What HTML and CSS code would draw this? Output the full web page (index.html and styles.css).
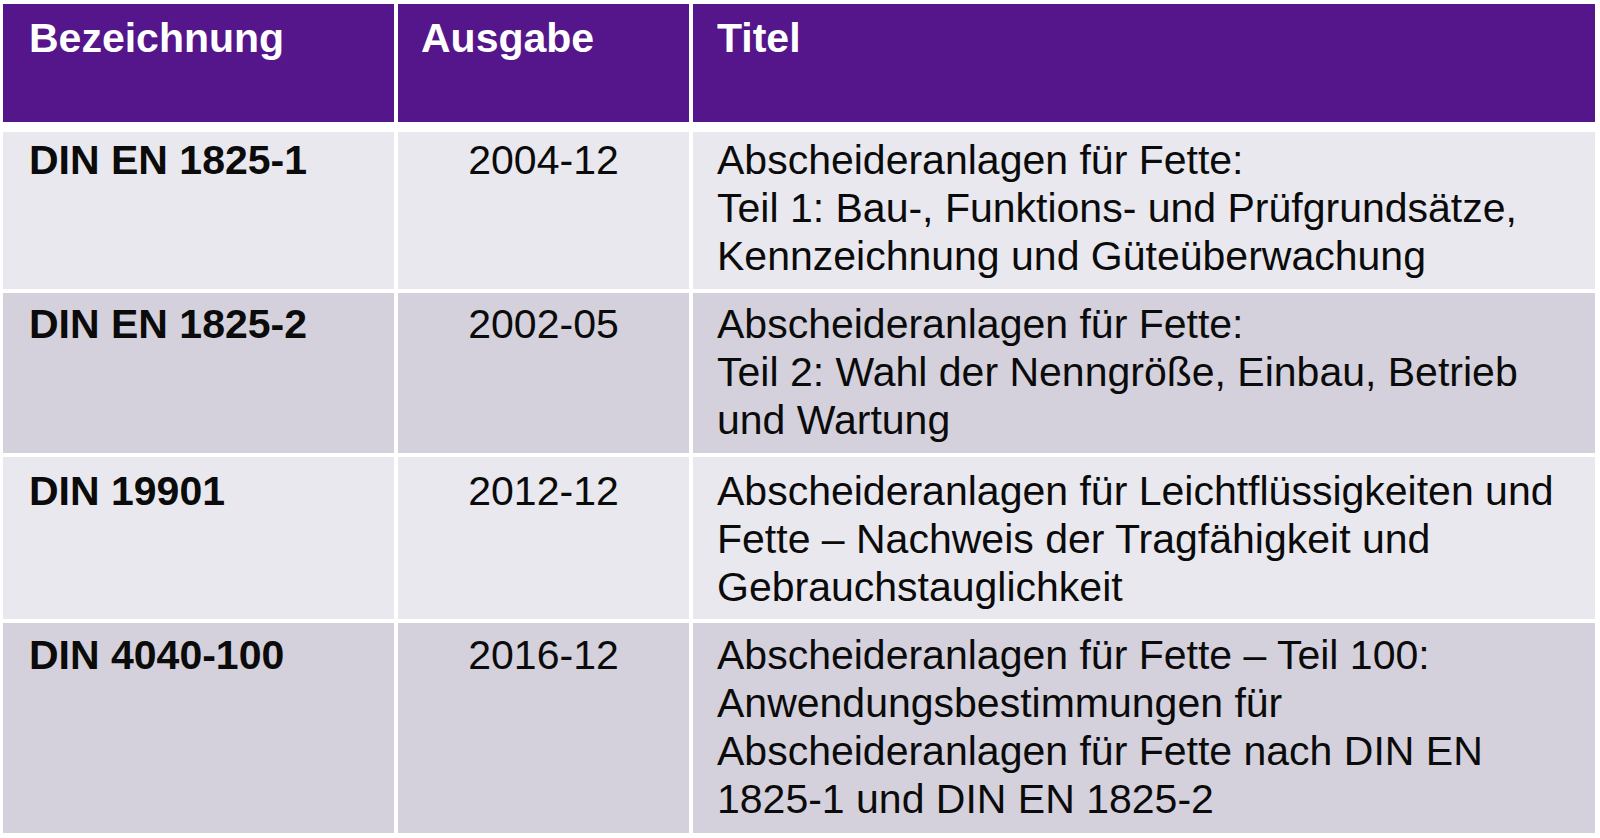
FILE: index.html
```html
<!DOCTYPE html>
<html lang="de">
<head>
<meta charset="utf-8">
<title>Normen Abscheideranlagen</title>
<link rel="stylesheet" href="styles.css">
</head>
<body>
<div class="table">
  <div class="row head">
    <div class="cell c1">Bezeichnung</div>
    <div class="cell c2">Ausgabe</div>
    <div class="cell c3">Titel</div>
  </div>
  <div class="row light r1">
    <div class="cell c1">DIN EN 1825-1</div>
    <div class="cell c2">2004-12</div>
    <div class="cell c3">Abscheideranlagen für Fette:<br>Teil 1: Bau-, Funktions- und Prüfgrundsätze,<br>Kennzeichnung und Güteüberwachung</div>
  </div>
  <div class="row dark r2">
    <div class="cell c1">DIN EN 1825-2</div>
    <div class="cell c2">2002-05</div>
    <div class="cell c3">Abscheideranlagen für Fette:<br>Teil 2: Wahl der Nenngröße, Einbau, Betrieb<br>und Wartung</div>
  </div>
  <div class="row light r3">
    <div class="cell c1">DIN 19901</div>
    <div class="cell c2">2012-12</div>
    <div class="cell c3">Abscheideranlagen für Leichtflüssigkeiten und<br>Fette – Nachweis der Tragfähigkeit und<br>Gebrauchstauglichkeit</div>
  </div>
  <div class="row dark r4">
    <div class="cell c1">DIN 4040-100</div>
    <div class="cell c2">2016-12</div>
    <div class="cell c3">Abscheideranlagen für Fette – Teil 100:<br>Anwendungsbestimmungen für<br>Abscheideranlagen für Fette nach DIN EN<br>1825-1 und DIN EN 1825-2</div>
  </div>
</div>
</body>
</html>
```

FILE: styles.css
```css
html, body {
  margin: 0;
  padding: 0;
  background: #ffffff;
}

body {
  font-family: "Liberation Sans", Arial, sans-serif;
  color: #0b0b0b;
}

.table {
  display: flex;
  flex-direction: column;
  gap: 4px;
  margin: 4px 0 0 3px;
  width: 1592px;
}

.row {
  display: grid;
  grid-template-columns: 391px 291px 902px;
  column-gap: 4px;
}

.cell {
  font-size: 41px;
  line-height: 48px;
  padding: 7px 24px 0 24px;
  white-space: nowrap;
}

.c1 {
  padding-left: 26px;
  font-weight: bold;
}

.c2 {
  text-align: center;
}

.head {
  height: 118px;
  margin-bottom: 6px;
}

.head .cell {
  background: #54168a;
  color: #ffffff;
  font-weight: bold;
  padding-top: 10px;
}

.head .c2 {
  text-align: left;
  padding-left: 23px;
}

.light .cell {
  background: #e9e8ee;
}

.dark .cell {
  background: #d4d1dc;
}

.r1 { height: 157px; }
.r2 { height: 160px; }
.r3 { height: 162px; }
.r4 { height: 210px; }

.r1 .cell { padding-top: 4px; }
.r3 .cell { padding-top: 10px; }
.r4 .cell { padding-top: 8px; }
```
